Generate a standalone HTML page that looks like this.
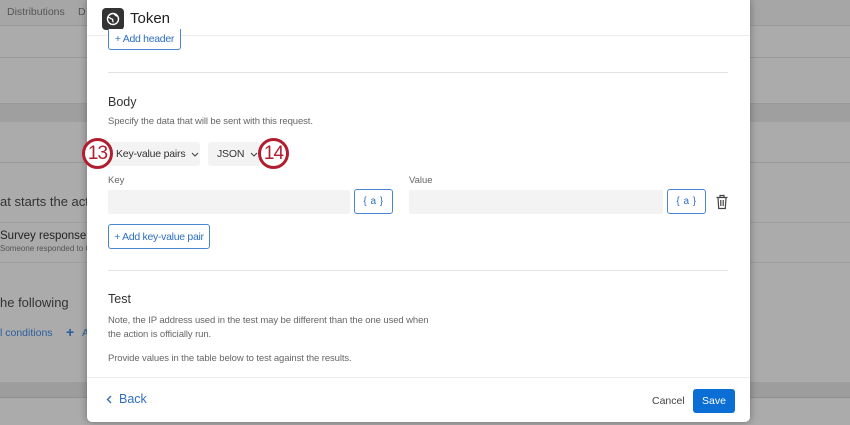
<!DOCTYPE html>
<html><head><meta charset="utf-8"><style>
*{margin:0;padding:0;box-sizing:border-box}
body{width:850px;height:425px;overflow:hidden;background:#ababab;font-family:"Liberation Sans",sans-serif;position:relative}
.a{position:absolute;white-space:nowrap}
.btn{position:absolute;border:1px solid #4a86d0;border-radius:3px;background:#fff;color:#2f6fc0;font-size:10.5px;letter-spacing:-0.3px;display:flex;align-items:center;justify-content:center;white-space:nowrap}
.inp{position:absolute;background:#f3f3f3;border-radius:2px}
.dd{position:absolute;background:#f3f3f3;border-radius:3px;font-size:10.5px;letter-spacing:-0.2px;color:#333;display:flex;align-items:center;padding-left:9px;white-space:nowrap}
.dd svg{margin-left:6px}
.circ{position:absolute;width:31px;height:31px;border-radius:50%;border:3px solid #b01e2f;background:#fff;color:#b01e2f;font-size:19px;display:flex;align-items:center;justify-content:center;letter-spacing:-1px}
.ln{position:absolute;left:0;width:850px;height:1px;background:#999}
</style></head><body>
<div class="a" style="left:0;top:0;width:850px;height:25px;background:#a6a6a6"></div>
<div class="ln" style="top:25px"></div>
<div class="ln" style="top:57px"></div>
<div class="a" style="left:0;top:103px;width:850px;height:19px;background:#9f9f9f"></div>
<div class="ln" style="top:103px"></div>
<div class="ln" style="top:162px"></div>
<div class="ln" style="top:262px;background:#a0a0a0"></div>
<div class="ln" style="top:222px;background:#a0a0a0"></div>
<div class="a" style="left:0;top:382px;width:850px;height:15px;background:#9d9d9d"></div>
<div class="ln" style="top:397px;background:#909090"></div>
<div class="a" style="left:7px;top:6px;font-size:10.5px;color:#555">Distributions</div>
<div class="a" style="left:78px;top:6px;font-size:10.5px;color:#555">D</div>
<div class="a" style="left:0;top:194px;font-size:13px;color:#333">at starts the actio</div>
<div class="a" style="left:0;top:230px;font-size:11.5px;color:#222">Survey response</div>
<div class="a" style="left:0;top:244px;font-size:8px;color:#555">Someone responded to C</div>
<div class="a" style="left:0;top:295px;font-size:13px;color:#333">he following</div>
<div class="a" style="left:0;top:327px;font-size:10.5px;color:#2a5d9f">l conditions</div>
<div class="a" style="left:66px;top:324px;font-size:14px;color:#2a5d9f;font-weight:bold">+</div>
<div class="a" style="left:82px;top:327px;font-size:10.5px;color:#2a5d9f">A</div>

<div class="a" style="left:87px;top:0;width:663px;height:422px;background:#fff;border-radius:0 0 5px 5px;box-shadow:0 0 8px rgba(0,0,0,.35)"></div>
<div class="a" style="left:87px;top:35px;width:663px;height:1px;background:#ececec"></div>
<div class="a" style="left:102px;top:8px;width:22px;height:22px;background:#333;border-radius:4px">
<svg width="22" height="22" viewBox="0 0 22 22"><circle cx="11" cy="11" r="5.5" fill="none" stroke="#fff" stroke-width="1.4"/><path d="M6.5 9.5c2 0 2 1.5 3.5 1.5s0 2.5 1.5 3M12.5 5.8c0 1.5 1.5 1.5 2.5 2.5" fill="none" stroke="#fff" stroke-width="1.3"/></svg></div>
<div class="a" style="left:130px;top:10px;font-size:15px;color:#222">Token</div>

<div class="btn" style="left:108px;top:29px;width:73px;height:21px;border-top:none;border-radius:0 0 3px 3px">+ Add header</div>
<div class="a" style="left:108px;top:72px;width:620px;height:1px;background:#e3e3e3"></div>
<div class="a" style="left:108px;top:95px;font-size:12.5px;color:#333">Body</div>
<div class="a" style="left:108px;top:116px;font-size:9.5px;color:#666;letter-spacing:-0.1px">Specify the data that will be sent with this request.</div>
<div class="dd" style="left:107px;top:142px;width:93px;height:24px">Key-value pairs<svg width="8" height="5" viewBox="0 0 8 5"><path d="M1 1l3 3 3-3" fill="none" stroke="#444" stroke-width="1.1"/></svg></div>
<div class="dd" style="left:208px;top:142px;width:52px;height:24px">JSON<svg width="8" height="5" viewBox="0 0 8 5"><path d="M1 1l3 3 3-3" fill="none" stroke="#444" stroke-width="1.1"/></svg></div>
<div class="circ" style="left:82px;top:138px">13</div>
<div class="circ" style="left:258px;top:138px">14</div>

<div class="a" style="left:108px;top:175px;font-size:9.5px;color:#666">Key</div>
<div class="a" style="left:409px;top:175px;font-size:9.5px;color:#666">Value</div>
<div class="inp" style="left:108px;top:190px;width:242px;height:24px"></div>
<div class="btn" style="left:354px;top:189px;width:39px;height:25px;font-size:10px;letter-spacing:0.5px">{ a }</div>
<div class="inp" style="left:409px;top:190px;width:254px;height:24px"></div>
<div class="btn" style="left:667px;top:189px;width:39px;height:25px;font-size:10px;letter-spacing:0.5px">{ a }</div>
<svg class="a" style="left:715px;top:194px" width="14" height="16" viewBox="0 0 14 16"><path d="M1.5 3.5h11M5 3.5V1.5h4v2M3 3.5l.7 11h6.6l.7-11M5.8 6v6M8.2 6v6" fill="none" stroke="#444" stroke-width="1.2"/></svg>
<div class="btn" style="left:108px;top:224px;width:102px;height:25px">+ Add key-value pair</div>
<div class="a" style="left:108px;top:270px;width:620px;height:1px;background:#e3e3e3"></div>
<div class="a" style="left:108px;top:292px;font-size:12.5px;color:#333">Test</div>
<div class="a" style="left:108px;top:314px;font-size:9.5px;color:#666;line-height:13.5px;letter-spacing:-0.1px">Note, the IP address used in the test may be different than the one used when<br>the action is officially run.</div>
<div class="a" style="left:108px;top:353px;font-size:9.5px;color:#666;letter-spacing:-0.1px">Provide values in the table below to test against the results.</div>
<div class="a" style="left:87px;top:377px;width:663px;height:1px;background:#ececec"></div>
<svg class="a" style="left:106px;top:395px" width="6" height="9" viewBox="0 0 6 9"><path d="M5 1L1.5 4.5 5 8" fill="none" stroke="#2f6fc0" stroke-width="1.4"/></svg>
<div class="a" style="left:119px;top:392px;font-size:12.5px;color:#2f6fc0">Back</div>
<div class="a" style="left:652px;top:395px;font-size:10.5px;color:#444">Cancel</div>
<div class="a" style="left:693px;top:389px;width:42px;height:24px;background:#0b6ed4;border-radius:3px;color:#fff;font-size:10.5px;display:flex;align-items:center;justify-content:center">Save</div>
</body></html>
